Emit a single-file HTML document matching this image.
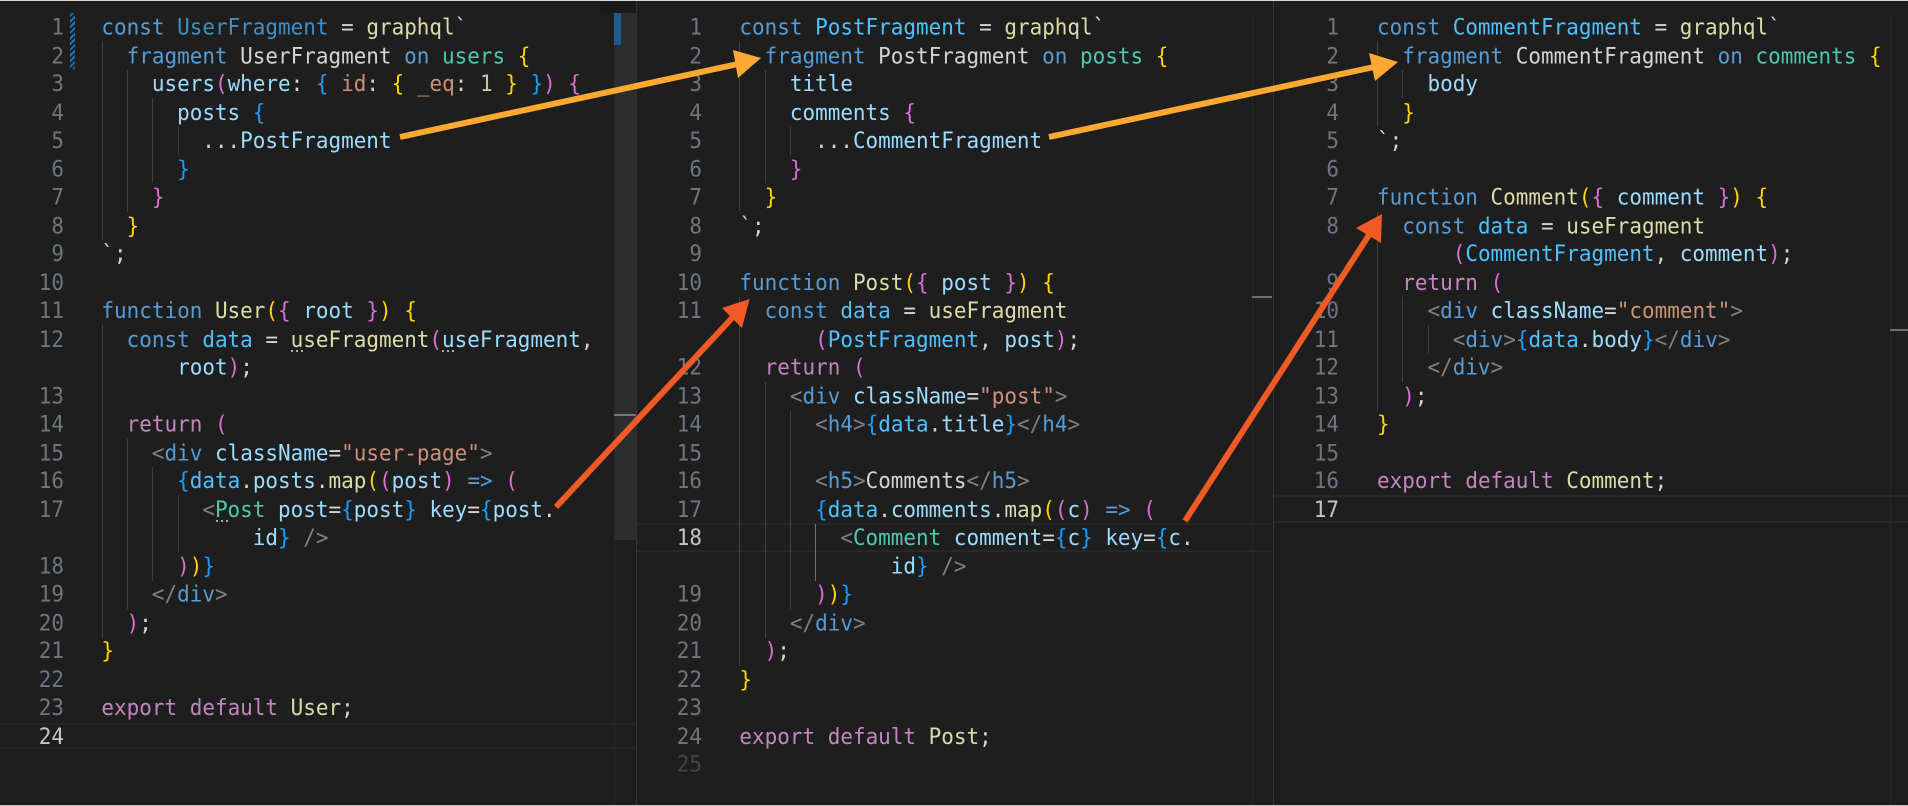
<!DOCTYPE html>
<html><head><meta charset="utf-8"><style>
html,body{margin:0;padding:0;background:#1e1e1e;width:1908px;height:806px;overflow:hidden}
pre{position:absolute;margin:0;top:13px;font:20.96px/26.5px "DejaVu Sans Mono","Liberation Mono",monospace;color:#d4d4d4;white-space:pre;transform:scaleY(1.07);transform-origin:0 0;filter:blur(.3px)}
.ln{color:#6e7681;text-align:right;width:60px}
.a{position:absolute}
svg{position:absolute;left:0;top:0}
.k{color:#569cd6}.v{color:#4fc1ff}.f{color:#dcdcaa}.t{color:#4ec9b0}.p{color:#9cdcfe}.s{color:#ce9178}.y{color:#ffd700}.m{color:#da70d6}.b{color:#179fff}.g{color:#808080}.c{color:#c586c0}.n{color:#b5cea8}.w{color:#c6c6c6}.d{color:#444}.u{color:#3f8fc4}
</style></head><body>
<div class="a" style="left:0;top:0;width:1908px;height:1px;background:#d8d8d8"></div>
<div class="a" style="left:0;top:805px;width:1908px;height:1px;background:#c8c8c8"></div>
<div class="a" style="left:636px;top:1px;width:1px;height:804px;background:#333"></div>
<div class="a" style="left:1273px;top:1px;width:1px;height:804px;background:#333"></div>
<div class="a" style="left:600px;top:1px;width:35px;height:12px;background:#1a1a1a"></div>
<div class="a" style="left:614px;top:13px;width:22px;height:527px;background:#2c2d2e"></div>
<div class="a" style="left:614px;top:13px;width:1px;height:792px;background:#282828"></div>
<div class="a" style="left:614px;top:13px;width:7px;height:32px;background:#1f5c8f"></div>
<div class="a" style="left:614px;top:414px;width:22px;height:2px;background:#767676"></div>
<div class="a" style="left:1252px;top:13px;width:1px;height:792px;background:#272727"></div>
<div class="a" style="left:1252px;top:296px;width:20px;height:2px;background:#6f6f6f"></div>
<div class="a" style="left:1890px;top:13px;width:1px;height:792px;background:#272727"></div>
<div class="a" style="left:1890px;top:329px;width:18px;height:2px;background:#6f6f6f"></div>
<div class="a" style="left:70px;top:13px;width:5px;height:56px;background:repeating-linear-gradient(-45deg,#0e78c8 0 2px,#1e1e1e 2px 4px)"></div>
<div class="a" style="left:0;top:723px;width:634px;height:22px;border:2px solid #282828;border-left:0;border-right:0"></div>
<div class="a" style="left:637px;top:523px;width:635px;height:25px;border:2px solid #282828;border-left:0;border-right:0"></div>
<div class="a" style="left:1274px;top:495px;width:634px;height:24px;border:2px solid #282828;border-left:0;border-right:0"></div>
<svg width="1908" height="806" fill="none" stroke="#404040" stroke-width="1">
<path d="M102.5 41V240M102.5 325V638M127.5 70V212M127.5 439V609M152.5 98V183M152.5 467V581M178.5 127V155M178.5 495V552"/>
<path d="M739.5 41V211M739.5 297V666M765.5 70V183M765.5 382V638M790.5 127V155M790.5 411V609"/>
<path d="M815.5 524V581" stroke="#707070"/>
<path d="M1377.5 41V126M1377.5 212V411M1402.5 70V98M1402.5 297V382M1428.5 325V353"/>
</svg>
<pre class="ln" style="left:4px">1
2
3
4
5
6
7
8
9
10
11
12

13
14
15
16
17

18
19
20
21
22
23
<span class="w">24</span></pre>
<pre style="left:101.4px"><span class="k">const</span> <span class="u">UserFragment</span> = <span class="f">graphql</span>`
  <span class="k">fragment</span> UserFragment <span class="k">on</span> <span class="t">users</span> <span class="y">{</span>
    <span class="p">users</span><span class="m">(</span><span class="p">where</span>: <span class="b">{</span> <span class="s">id</span>: <span class="y">{</span> <span class="s">_eq</span>: <span class="n">1</span> <span class="y">}</span> <span class="b">}</span><span class="m">) {</span>
      <span class="p">posts</span> <span class="b">{</span>
        ...<span class="p">PostFragment</span>
      <span class="b">}</span>
    <span class="m">}</span>
  <span class="y">}</span>
`;

<span class="k">function</span> <span class="f">User</span><span class="y">(</span><span class="m">{</span> <span class="p">root</span> <span class="m">}</span><span class="y">)</span> <span class="y">{</span>
  <span class="k">const</span> <span class="v">data</span> = <span class="f">useFragment</span><span class="m">(</span><span class="p">useFragment</span>,
      <span class="p">root</span><span class="m">)</span>;

  <span class="c">return</span> <span class="m">(</span>
    <span class="g">&lt;</span><span class="k">div</span> <span class="p">className</span>=<span class="s">"user-page"</span><span class="g">&gt;</span>
      <span class="b">{</span><span class="v">data</span>.<span class="p">posts</span>.<span class="f">map</span><span class="y">(</span><span class="m">(</span><span class="p">post</span><span class="m">)</span> <span class="k">=&gt;</span> <span class="m">(</span>
        <span class="g">&lt;</span><span class="t">Post</span> <span class="p">post</span>=<span class="b">{</span><span class="p">post</span><span class="b">}</span> <span class="p">key</span>=<span class="b">{</span><span class="p">post</span>.
            <span class="p">id</span><span class="b">}</span> <span class="g">/&gt;</span>
      <span class="m">)</span><span class="y">)</span><span class="b">}</span>
    <span class="g">&lt;/</span><span class="k">div</span><span class="g">&gt;</span>
  <span class="m">)</span>;
<span class="y">}</span>

<span class="c">export</span> <span class="c">default</span> <span class="f">User</span>;</pre>
<pre class="ln" style="left:642px">1
2
3
4
5
6
7
8
9
10
11

12
13
14
15
16
17
<span class="w">18</span>

19
20
21
22
23
24
<span class="d">25</span></pre>
<pre style="left:739.4px"><span class="k">const</span> <span class="v">PostFragment</span> = <span class="f">graphql</span>`
  <span class="k">fragment</span> PostFragment <span class="k">on</span> <span class="t">posts</span> <span class="y">{</span>
    <span class="p">title</span>
    <span class="p">comments</span> <span class="m">{</span>
      ...<span class="p">CommentFragment</span>
    <span class="m">}</span>
  <span class="y">}</span>
`;

<span class="k">function</span> <span class="f">Post</span><span class="y">(</span><span class="m">{</span> <span class="p">post</span> <span class="m">}</span><span class="y">)</span> <span class="y">{</span>
  <span class="k">const</span> <span class="v">data</span> = <span class="f">useFragment</span>
      <span class="m">(</span><span class="v">PostFragment</span>, <span class="p">post</span><span class="m">)</span>;
  <span class="c">return</span> <span class="m">(</span>
    <span class="g">&lt;</span><span class="k">div</span> <span class="p">className</span>=<span class="s">"post"</span><span class="g">&gt;</span>
      <span class="g">&lt;</span><span class="k">h4</span><span class="g">&gt;</span><span class="b">{</span><span class="v">data</span>.<span class="p">title</span><span class="b">}</span><span class="g">&lt;/</span><span class="k">h4</span><span class="g">&gt;</span>

      <span class="g">&lt;</span><span class="k">h5</span><span class="g">&gt;</span>Comments<span class="g">&lt;/</span><span class="k">h5</span><span class="g">&gt;</span>
      <span class="b">{</span><span class="v">data</span>.<span class="p">comments</span>.<span class="f">map</span><span class="y">(</span><span class="m">(</span><span class="p">c</span><span class="m">)</span> <span class="k">=&gt;</span> <span class="m">(</span>
        <span class="g">&lt;</span><span class="t">Comment</span> <span class="p">comment</span>=<span class="b">{</span><span class="p">c</span><span class="b">}</span> <span class="p">key</span>=<span class="b">{</span><span class="p">c</span>.
            <span class="p">id</span><span class="b">}</span> <span class="g">/&gt;</span>
      <span class="m">)</span><span class="y">)</span><span class="b">}</span>
    <span class="g">&lt;/</span><span class="k">div</span><span class="g">&gt;</span>
  <span class="m">)</span>;
<span class="y">}</span>

<span class="c">export</span> <span class="c">default</span> <span class="f">Post</span>;</pre>
<pre class="ln" style="left:1279px">1
2
3
4
5
6
7
8

9
10
11
12
13
14
15
16
<span class="w">17</span></pre>
<pre style="left:1377px"><span class="k">const</span> <span class="v">CommentFragment</span> = <span class="f">graphql</span>`
  <span class="k">fragment</span> CommentFragment <span class="k">on</span> <span class="t">comments</span> <span class="y">{</span>
    <span class="p">body</span>
  <span class="y">}</span>
`;

<span class="k">function</span> <span class="f">Comment</span><span class="y">(</span><span class="m">{</span> <span class="p">comment</span> <span class="m">}</span><span class="y">)</span> <span class="y">{</span>
  <span class="k">const</span> <span class="v">data</span> = <span class="f">useFragment</span>
      <span class="m">(</span><span class="v">CommentFragment</span>, <span class="p">comment</span><span class="m">)</span>;
  <span class="c">return</span> <span class="m">(</span>
    <span class="g">&lt;</span><span class="k">div</span> <span class="p">className</span>=<span class="s">"comment"</span><span class="g">&gt;</span>
      <span class="g">&lt;</span><span class="k">div</span><span class="g">&gt;</span><span class="b">{</span><span class="v">data</span>.<span class="p">body</span><span class="b">}</span><span class="g">&lt;/</span><span class="k">div</span><span class="g">&gt;</span>
    <span class="g">&lt;/</span><span class="k">div</span><span class="g">&gt;</span>
  <span class="m">)</span>;
<span class="y">}</span>

<span class="c">export</span> <span class="c">default</span> <span class="f">Comment</span>;</pre>
<svg width="1908" height="806">
<g fill="#aaa">
<rect x="291" y="350" width="2" height="2"/><rect x="296" y="350" width="2" height="2"/><rect x="301" y="350" width="2" height="2"/>
<rect x="442" y="350" width="2" height="2"/><rect x="447" y="350" width="2" height="2"/><rect x="452" y="350" width="2" height="2"/>
<rect x="216" y="520" width="2" height="2"/><rect x="221" y="520" width="2" height="2"/><rect x="226" y="520" width="2" height="2"/>
</g>
<g stroke="#fda931" stroke-width="6" fill="#fda931">
<path d="M400 137L738 64" fill="none"/>
<path d="M761 58L733 50L738 78Z" stroke="none"/>
<path d="M1049 137L1374 67" fill="none"/>
<path d="M1398 62L1369 53L1375 81Z" stroke="none"/>
</g>
<g stroke="#f15a24" stroke-width="6" fill="#f15a24">
<path d="M556 507L733 317" fill="none"/>
<path d="M749.5 299L722 308L742 328Z" stroke="none"/>
<path d="M1185 521L1369 235" fill="none"/>
<path d="M1382 214L1356 228L1381 243Z" stroke="none"/>
</g>
</svg>
</body></html>
